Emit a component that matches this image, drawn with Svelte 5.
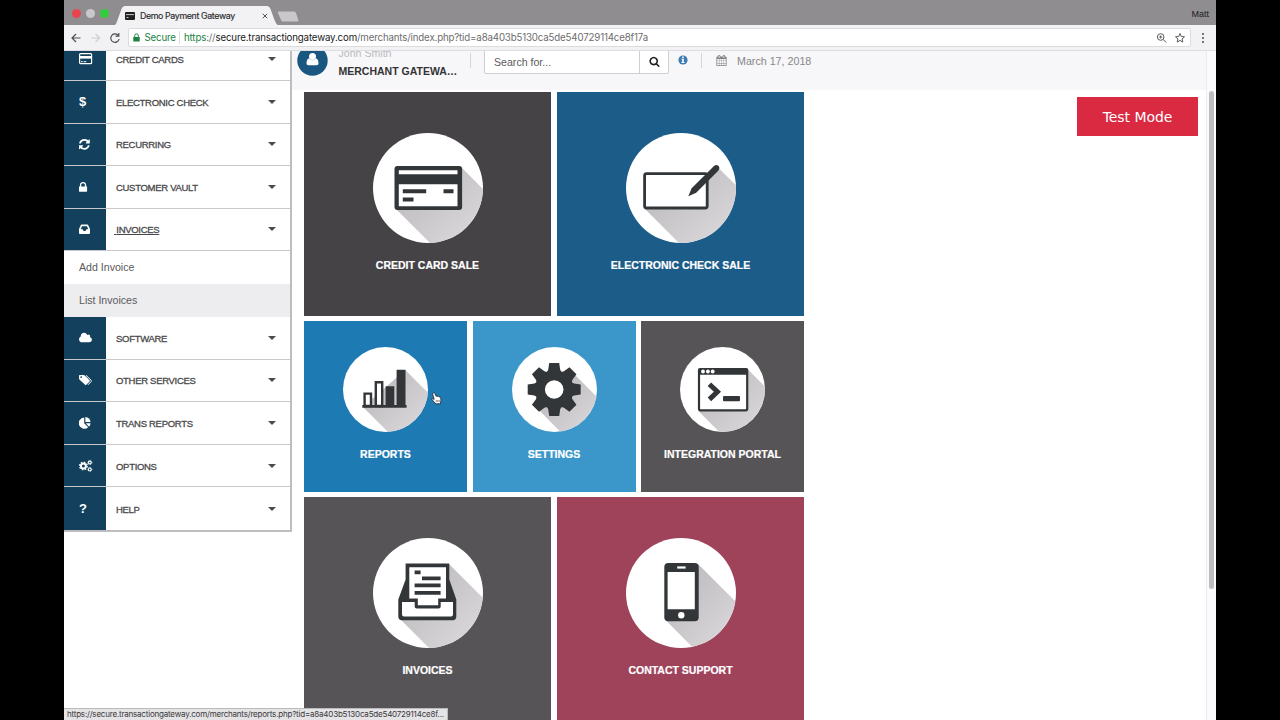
<script>
  const upper = [
    { icon: 'card', label: 'CREDIT CARDS' },
    { icon: 'dollar', label: 'ELECTRONIC CHECK' },
    { icon: 'refresh', label: 'RECURRING' },
    { icon: 'lock', label: 'CUSTOMER VAULT' },
    { icon: 'inbox', label: 'INVOICES', active: true }
  ];
  const lower = [
    { icon: 'cloud', label: 'SOFTWARE' },
    { icon: 'tags', label: 'OTHER SERVICES' },
    { icon: 'pie', label: 'TRANS REPORTS' },
    { icon: 'cogs', label: 'OPTIONS' },
    { icon: 'help', label: 'HELP' }
  ];
  const tileRows = [
    { size: 'big', tiles: [
      { kind: 'credit', label: 'CREDIT CARD SALE', tone: 'charcoal' },
      { kind: 'check', label: 'ELECTRONIC CHECK SALE', tone: 'navy' }
    ] },
    { size: 'small', tiles: [
      { kind: 'reports', label: 'REPORTS', tone: 'blue' },
      { kind: 'settings', label: 'SETTINGS', tone: 'sky' },
      { kind: 'portal', label: 'INTEGRATION PORTAL', tone: 'grey' }
    ] },
    { size: 'big', tiles: [
      { kind: 'invoices', label: 'INVOICES', tone: 'grey' },
      { kind: 'support', label: 'CONTACT SUPPORT', tone: 'wine' }
    ] }
  ];
  const shadows = {
    credit: 'M88 34L140 86V140H87L23 76Z',
    check: 'M92.5 35L140 82V140H83L19 76Z',
    reports: 'M62.3 23L110 71V110H70L20 60Z',
    settings: 'M63 28L110 75V110H73L26 62Z',
    portal: 'M67.5 22L110 65V110H64L18.5 64Z',
    invoices: 'M76 26L140 90V140H86L27 81Z',
    support: 'M72 26L140 94V140H97L39.5 82Z'
  };
  const teeth = [0, 45, 90, 135, 180, 225, 270, 315];
</script>

{#snippet menuIcon(name)}
  {#if name === 'dollar'}
    <span class="glyph">$</span>
  {:else if name === 'help'}
    <span class="glyph">?</span>
  {:else if name === 'refresh'}
    <svg width="12.6" height="12.6" viewBox="128 0 1792 1792" fill="#fff"><path d="M1639 1056q0 5-1 7-64 268-268 434.5t-478 166.5q-146 0-282.5-55t-243.5-157l-129 129q-19 19-45 19t-45-19-19-45v-448q0-26 19-45t45-19h448q26 0 45 19t19 45-19 45l-137 137q71 66 161 102t187 36q134 0 250-65t186-179q11-17 53-117 8-23 30-23h192q13 0 22.5 9.5t9.5 22.5zm25-800v448q0 26-19 45t-45 19h-448q-26 0-45-19t-19-45 19-45l138-138q-148-137-349-137-134 0-250 65t-186 179q-11 17-53 117-8 23-30 23h-199q-13 0-22.5-9.5t-9.5-22.5v-7q65-268 270-434.5t480-166.5q146 0 284 55.5t245 156.5l130-129q19-19 45-19t45 19 19 45z" /></svg>
  {:else if name === 'lock'}
    <svg width="12.6" height="12.6" viewBox="320 0 1792 1792" fill="#fff"><path d="M640 768h512v-192q0-106-75-181t-181-75-181 75-75 181v192zm832 96v576q0 40-28 68t-68 28h-960q-40 0-68-28t-28-68v-576q0-40 28-68t68-28h32v-192q0-184 132-316t316-132 316 132 132 316v192h32q40 0 68 28t28 68z" /></svg>
  {:else if name === 'cloud'}
    <svg width="13.4" height="12" viewBox="60 0 2000 1792" fill="#fff"><path d="M1984 1152q0 159-112.5 271.5t-271.5 112.5h-1088q-185 0-316.5-131.5t-131.5-316.5q0-132 71-241.5t187-163.5q-2-28-2-43 0-212 150-362t362-150q158 0 286.5 88t187.5 230q70-62 166-62 106 0 181 75t75 181q0 75-41 138 129 30 213 134.5t84 239.5z" /></svg>
  {:else if name === 'card'}
    <svg width="14" height="14" viewBox="0 0 14 14"><rect x=".6" y="1.7" width="12" height="10" rx="1" fill="none" stroke="#fff" stroke-width="1.2" /><path d="M.6 4h12v2.6H.6z" fill="#fff" /><path d="M2 9.7h1.8M4.7 9.7h2.6" stroke="#fff" stroke-width="1" /></svg>
  {:else if name === 'inbox'}
    <svg width="14" height="14" viewBox="0 0 14 14"><path fill="#fff" fill-rule="evenodd" d="M2.6 2.6h5.8q.6 0 .9.6L11 7v4q0 .9-.9.9H.9Q0 11.900 0 11V7l1.700-3.800q.3-.6.9-.6zM3 4.200L1.800 7.300h1.900l.8 1.600h2l.8-1.600h1.900L8 4.200z" /></svg>
  {:else if name === 'tags'}
    <svg width="14" height="14" viewBox="0 0 14 14"><path fill="#fff" fill-rule="evenodd" d="M0 2.800Q0 2 .8 2h3.600q.8 0 1.400.6l4.800 4.700q.6.6 0 1.200l-3.300 3.300q-.6.6-1.200 0L.6 6.700Q0 6.200 0 5.300zM2.200 3.200a.9.900 0 1 0 0 1.800.9.900 0 0 0 0-1.800z" /><path fill="none" stroke="#fff" stroke-width="1" d="M7 2.300l5.200 5q.6.600 0 1.200L9 11.800" /></svg>
  {:else if name === 'pie'}
    <svg width="14" height="14" viewBox="0 0 14 14" fill="#fff"><path d="M5.200 1.600V7.200L9.200 11.200A5.600 5.600 0 1 1 5.200 1.600z" /><path d="M6.400 1v5.100h5.100A5.200 5.200 0 0 0 6.400 1z" /><path d="M6.800 7.300h4.700q0 2-1.400 3.400z" /></svg>
  {:else if name === 'cogs'}
    <svg width="14" height="14" viewBox="0 0 14 14" fill="none" stroke="#fff"><circle cx="4.400" cy="7" r="2.500" stroke-width="2" /><circle cx="4.400" cy="7" r="3.900" stroke-width="1.200" stroke-dasharray="1.530 1.530" /><circle cx="10.800" cy="3.500" r="1.400" stroke-width="1.100" /><circle cx="10.800" cy="3.500" r="2.100" stroke-width=".7" stroke-dasharray=".94 .94" /><circle cx="10.800" cy="10.400" r="1.400" stroke-width="1.100" /><circle cx="10.800" cy="10.400" r="2.100" stroke-width=".7" stroke-dasharray=".94 .94" /></svg>
  {/if}
{/snippet}

{#snippet menuRow(item)}
  <li class="row">
    <span class="row-icon">{@render menuIcon(item.icon)}</span>
    <span class="row-label" class:active={item.active}>{#if item.active}&nbsp;{/if}{item.label}</span>
    <span class="caret"></span>
  </li>
{/snippet}

{#snippet tileIcon(kind, d)}
  <svg class="disc" width={d} height={d} viewBox="0 0 {d} {d}">
    <defs>
      <clipPath id="clip-{kind}"><circle cx={d / 2} cy={d / 2} r={d / 2} /></clipPath>
      <linearGradient id="fade-{kind}" x1="0" y1="0" x2="1" y2="1">
        <stop offset=".2" stop-color="#c1bfc1" /><stop offset=".7" stop-color="#dcdadc" />
      </linearGradient>
    </defs>
    <circle cx={d / 2} cy={d / 2} r={d / 2} fill="#fff" />
    <path d={shadows[kind]} fill="url(#fade-{kind})" clip-path="url(#clip-{kind})" />
    {#if kind === 'credit'}
      <rect x="21.500" y="33" width="67.600" height="44" rx="3" fill="#323638" />
      <path fill="#fff" d="M25.800 37.200h58.700v4H25.800zM25.800 51.200h58.700v22H25.800z" />
      <path fill="#323638" d="M29.800 56.200h23.400v4H29.800zM70.500 56.200h10v4h-10zM29.800 64.500h10.700v4H29.800z" />
    {:else if kind === 'check'}
      <rect x="18.600" y="40.700" width="62.600" height="34.300" rx="2" fill="#fff" stroke="#323638" stroke-width="2.800" />
      <path fill="#323638" d="M62.300 63.200L65.700 55.200L87.500 33.400Q90.500 31 92.500 33Q94.500 35 92 38L70.200 59.700z" />
    {:else if kind === 'reports'}
      <path fill="#323638" d="M19.300 58h44.300v2.700H19.300zM42.600 39.300h8.700V59h-8.700zM53.600 22.700h8.900V59h-8.900z" />
      <path fill="#fff" stroke="#323638" stroke-width="2.400" d="M21.600 46.600h6.400V59h-6.400zM32.800 35.300h6.400V59h-6.400z" />
    {:else if kind === 'settings'}
      <g transform="translate(42.200 42.500)" fill="#323638">
        <circle r="19.300" />
        {#each teeth as angle}
          <path transform="rotate({angle})" d="M-5 -26.500H5L6 -19.800L7.500 -17H-7.500L-6 -19.800z" />
        {/each}
        <circle r="9.300" fill="#fff" />
      </g>
    {:else if kind === 'portal'}
      <rect x="19" y="22" width="48.200" height="41.300" rx="1.500" fill="#fff" stroke="#323638" stroke-width="2.200" />
      <path fill="#323638" d="M18.500 21.500h49.200v6.300H18.500z" />
      <g fill="#fff"><circle cx="23" cy="24.500" r="1.900" /><circle cx="27.900" cy="24.500" r="1.900" /><circle cx="32.700" cy="24.500" r="1.900" /></g>
      <path fill="none" stroke="#323638" stroke-width="5" d="M29.400 37.200L37.400 44.800L29.400 52.400" />
      <rect x="43" y="49" width="17" height="5.200" rx="1" fill="#323638" />
    {:else if kind === 'invoices'}
      <path fill="#323638" d="M32.600 25.500h43.700v16L83.300 61.500V78.500Q83.300 82.200 79.600 82.200H29Q25.300 82.200 25.300 78.500V61.500L32.600 41.500z" />
      <path fill="#fff" d="M36.300 29.200H73v31.200H65.200V67.200H44.800V60.400H36.300z" />
      <path fill="#fff" d="M29 64H41.700V68.500Q41.700 70.600 43.800 70.600H65.600Q67.700 70.600 67.700 68.500V64H80V76.500Q80 78.500 78 78.500H31Q29 78.500 29 76.500z" />
      <path fill="#323638" d="M41.600 32.600h6v3.600h-6zM49 38.400h18.600v3.800H49zM41.600 45.600h26v3.700h-26zM41.600 53h26v3.800h-26z" />
    {:else if kind === 'support'}
      <rect x="38.300" y="25" width="34.400" height="58.200" rx="4" fill="#323638" />
      <path fill="#fff" d="M41.600 33.900h27.200v37.300H41.600z" />
      <rect x="51.200" y="28.400" width="8.400" height="2.200" fill="#fff" />
      <circle cx="55.300" cy="77.200" r="3.200" fill="#fff" />
    {/if}
  </svg>
{/snippet}

<div class="screen">
  <div class="browser">
    <div class="tabstrip">
      <i class="light red"></i><i class="light pale"></i><i class="light green"></i>
      <div class="tab">
        <svg class="tab-shape" width="166" height="20" viewBox="0 0 166 20"><path fill="#f2f1f3" d="M0 20C3 19 3.500 17 4.500 14L8.500 3Q9.500 0 12.500 0H153.500Q156.500 0 157.500 3L161.500 14Q163.500 19 166 20z" /></svg>
        <svg width="10" height="8" viewBox="0 0 10 8"><rect width="10" height="8" rx="1" fill="#222" /><path d="M1 2.600h8M1.500 5.500h2" stroke="#ddd" stroke-width=".9" /></svg>
        <span class="tab-title">Demo Payment Gateway</span>
        <svg width="6" height="6" viewBox="0 0 6 6"><path d="M.8.800l4.400 4.400M5.200.800L.8 5.200" stroke="#555" stroke-width="1" /></svg>
      </div>
      <svg class="newtab" width="23" height="11" viewBox="0 0 23 11"><path fill="#c9c7ca" d="M1.500 .5H17Q18.500 .5 19 2L21.500 9.500Q21.500 10.500 20.500 10.500H6Q4.500 10.500 4 9L1 2Q.5.500 1.500.500z" /></svg>
      <span class="profile">Matt</span>
    </div>

    <div class="toolbar">
      <svg class="nav" width="56" height="14" viewBox="0 0 56 14" fill="none" stroke-width="1.200">
        <path stroke="#4f4e50" d="M10.500 7H2M6 3L2 7l4 4" />
        <path stroke="#cfced0" d="M21 7h8.500M25.500 3l4 4-4 4" />
        <path stroke="#4f4e50" d="M48 4.200A4.200 4.200 0 1 0 49.100 8M48.800 2v3.200H45.500" />
      </svg>
      <div class="omnibox">
        <svg class="padlock" width="7" height="9" viewBox="0 0 7 9"><path d="M.3 4h6.400v4.500H.3z" fill="#1c8243" /><path d="M1.700 4.500V2.700a1.800 1.800 0 0 1 3.600 0v1.800" fill="none" stroke="#1c8243" stroke-width="1" /></svg>
        <span class="secure">Secure</span>
        <span class="url"><b>https</b>://<em>secure.transactiongateway.com</em>/merchants/index.php?tid=a8a403b5130ca5de540729114ce8f17a</span>
        <svg class="omni-icons" width="30" height="12" viewBox="0 0 30 12" fill="none" stroke="#5b5a5c">
          <circle cx="4.700" cy="5" r="3.300" stroke-width="1" /><path d="M7.200 7.500l3 3M3.200 5h3M4.700 3.500v3" stroke-width="1" />
          <path d="M24 1.500l1.300 3 3.200.3-2.400 2.100.7 3.200L24 8.400l-2.800 1.700.7-3.200-2.400-2.100 3.200-.3z" stroke-width="1" />
        </svg>
      </div>
      <span class="dots"><i></i><i></i><i></i></span>
    </div>

    <div class="page">
      <aside>
        <ul>
          {#each upper as item}{@render menuRow(item)}{/each}
          <li class="sub">Add Invoice</li>
          <li class="sub hover">List Invoices</li>
          {#each lower as item}{@render menuRow(item)}{/each}
        </ul>
      </aside>

      <main>
        <header>
          <svg class="avatar" width="31" height="31" viewBox="0 0 31 31"><circle cx="15.500" cy="15.500" r="15.200" fill="#195680" /><circle cx="15.500" cy="11.600" r="3.500" fill="#fff" /><path fill="#fff" d="M12 13.300Q15.500 17 19 13.300Q21.500 14.300 21.500 18.500Q21.500 20.200 19.800 20.200H11.200Q9.500 20.200 9.500 18.500Q9.500 14.300 12 13.300z" /></svg>
          <div class="who"><span class="person">John Smith</span><span class="merchant">MERCHANT GATEWA…</span></div>
          <i class="divider first"></i>
          <div class="search">
            <span class="field">Search for...</span>
            <span class="go"><svg width="11" height="11" viewBox="0 0 1792 1792" fill="#222"><path d="M1216 832q0-185-131.500-316.500t-316.500-131.500-316.500 131.500-131.500 316.500 131.500 316.500 316.500 131.500 316.500-131.500 131.500-316.500zm512 832q0 52-38 90t-90 38q-54 0-90-38l-343-342q-179 124-399 124-143 0-273.500-55.500t-225-150-150-225-55.500-273.500 55.500-273.500 150-225 225-150 273.500-55.500 273.500 55.500 225 150 150 225 55.500 273.500q0 220-124 399l343 343q37 37 37 90z" /></svg></span>
          </div>
          <svg class="info" width="10" height="10" viewBox="0 0 10 10"><circle cx="5" cy="5" r="4.600" fill="#3e7cb1" /><path fill="#fff" d="M4.200 1.500h1.600V3H4.200zM3.600 3.800h2.200v3.100h.7v1H3.500v-1h.7V4.800h-.6z" /></svg>
          <i class="divider second"></i>
          <svg class="calendar" width="11" height="11" viewBox="64 0 1664 1792" fill="#858386"><path d="M192 1664h288v-288h-288v288zm352 0h320v-288h-320v288zm-352-352h288v-320h-288v320zm352 0h320v-320h-320v320zm-352-384h288v-288h-288v288zm736 736h320v-288h-320v288zm-384-736h320v-288h-320v288zm768 736h288v-288h-288v288zm-384-352h320v-320h-320v320zm-352-864v-288q0-13-9.500-22.500t-22.500-9.500h-64q-13 0-22.500 9.500t-9.500 22.500v288q0 13 9.500 22.500t22.500 9.500h64q13 0 22.500-9.500t9.500-22.500zm736 864h288v-320h-288v320zm-384-384h320v-288h-320v288zm384 0h288v-288h-288v288zm32-480v-288q0-13-9.500-22.500t-22.500-9.500h-64q-13 0-22.500 9.500t-9.500 22.500v288q0 13 9.500 22.500t22.500 9.500h64q13 0 22.500-9.500t9.500-22.500zm384-64v1280q0 52-38 90t-90 38h-1408q-52 0-90-38t-38-90v-1280q0-52 38-90t90-38h128v-96q0-66 47-113t113-47h64q66 0 113 47t47 113v96h384v-96q0-66 47-113t113-47h64q66 0 113 47t47 113v96h128q52 0 90 38t38 90z" /></svg>
          <span class="date">March 17, 2018</span>
        </header>
        <div class="body">
          <div class="tiles">
            {#each tileRows as row}
              <div class="tile-row {row.size}">
                {#each row.tiles as tile}
                  <div class="tile {tile.tone}">
                    {@render tileIcon(tile.kind, row.size === 'big' ? 110 : 85)}
                    <span>{tile.label}</span>
                  </div>
                {/each}
              </div>
            {/each}
          </div>
          <div class="test-mode">Test Mode</div>
        </div>
      </main>
      <div class="scrollbar"><i></i></div>
    </div>

    <div class="status">https://secure.transactiongateway.com/merchants/reports.php?tid=a8a403b5130ca5de540729114ce8f...</div>
    <svg class="cursor" width="11" height="13" viewBox="0 0 11 13"><path fill="#fff" stroke="#222" stroke-width=".8" stroke-linejoin="round" d="M2.200 1Q3.200.300 3.900 1.500L5 4.200Q6 3.600 6.600 4.400Q7.700 4 8.200 4.900Q9.600 4.700 9.800 6.200Q10.200 8.500 9.300 11.800H4.600Q3.500 9.800 1 7.800Q.2 6.600 1.600 6.600L3.200 7.400L1.700 2.300Q1.500 1.400 2.200 1z" /><path d="M5.300 8v2M6.800 8v2M8.200 8v2" stroke="#444" stroke-width=".6" /></svg>
  </div>
</div>

<style>
  :global(body) { background: #000; }
  .screen { width: 1280px; height: 720px; background: #000; overflow: hidden; display: flex; justify-content: center; font-family: "Liberation Sans", Arial, sans-serif; }
  .browser { position: relative; width: 1152px; height: 720px; display: flex; flex-direction: column; background: #fff; overflow: hidden; }
  svg { display: block; flex: none; }

  .tabstrip { height: 25px; flex: none; display: flex; align-items: flex-start; background: #8f8d90; padding-left: 8px; }
  .light { width: 9px; height: 9px; border-radius: 50%; margin: 8.500px 4.800px 0 0; flex: none; }
  .red { background: #e8464f; } .pale { background: #cbc8cc; } .green { background: #32cc3c; }
  .tab { position: relative; width: 166px; height: 19px; margin: 6px 0 0 -.5px; padding: 0 0 0 12px; box-sizing: border-box; display: flex; align-items: center; font-family: Inter, sans-serif; flex: none; }
  .tab > * { position: relative; }
  .tab .tab-shape { position: absolute; left: 0; top: 0; }
  .tab-title { font-size: 8.800px; letter-spacing: -.35px; color: #2a292b; margin-left: 5px; width: 122.500px; white-space: nowrap; flex: none; -webkit-text-stroke: .15px #2a292b; }
  .newtab { margin: 11px 0 0 -2px; }
  .profile { margin: 8px 7px 0 auto; font-size: 9px; line-height: 12px; color: #1c1b1d; }

  .toolbar { height: 26px; flex: none; box-sizing: border-box; background: #f2f1f3; border-bottom: 1px solid #dddce0; display: flex; align-items: center; }
  .nav { margin-left: 6px; }
  .omnibox { width: 1063px; height: 19px; margin-left: 2px; box-sizing: border-box; border: 1px solid #dcdbdd; border-radius: 2px; background: #fff; display: flex; align-items: center; font-family: Inter, sans-serif; font-size: 9.700px; white-space: nowrap; }
  .padlock { margin-left: 4px; }
  .secure { color: #1c8243; margin-left: 4.500px; border-right: 1px solid #ddd; line-height: 13px; width: 34.500px; letter-spacing: -.15px; }
  .url { margin-left: 4px; color: #6d6c6e; letter-spacing: -.15px; }
  .url b { font-weight: 400; color: #1c8243; }
  .url em { font-style: normal; color: #1a1a1a; }
  .omni-icons { margin: 0 4px 0 auto; }
  .dots { display: flex; flex-direction: column; gap: 2px; margin-left: 11px; }
  .dots i { width: 2px; height: 2px; background: #4a494b; border-radius: 50%; }

  .page { flex: 1; min-height: 0; display: flex; overflow: hidden; }
  aside { width: 228px; flex: none; }
  ul { list-style: none; margin: -12.600px 0 0; padding: 0; box-sizing: border-box; width: 228px; background: #fff; border-right: 2px solid #bdbcbe; border-bottom: 2px solid #bdbcbe; }
  .row { height: 42.550px; box-sizing: border-box; border-bottom: 1px solid #c9c8ca; display: flex; align-items: center; }
  .row:last-child { border-bottom: 0; }
  .row-icon { width: 42px; height: 100%; box-sizing: border-box; padding-left: 15px; background: #12405d; display: flex; align-items: center; }
  .glyph { font-size: 13px; font-weight: 700; color: #fff; line-height: 14px; }
  .row-label { flex: 1; margin-left: 10px; padding-top: 1px; font-size: 9.500px; letter-spacing: -.3px; color: #4b4a4c; -webkit-text-stroke: .3px #4b4a4c; }
  .active { text-decoration: underline; margin-left: 8px; }
  .caret { border: 4px solid transparent; border-top: 4px solid #4b4a4c; border-bottom: 0; margin-right: 14px; }
  .sub { height: 33px; padding-left: 15px; font-size: 10.600px; line-height: 33px; color: #5b5a5c; }
  .hover { background: #edecef; }

  main { width: 914px; flex: none; display: flex; flex-direction: column; }
  header { height: 39px; flex: none; background: #f7f6f9; display: flex; align-items: flex-start; }
  .avatar { margin: -6px 0 0 5px; }
  .who { margin: -4px 0 0 10.500px; width: 131.500px; display: flex; flex-direction: column; white-space: nowrap; }
  .person { font-size: 10.600px; line-height: 13px; color: #bcbbbd; }
  .merchant { font-size: 10.500px; line-height: 13px; margin-top: 5px; font-weight: 700; color: #333; }
  .divider { width: 1px; height: 15px; margin-top: 2px; background: #d5d4d6; }
  .search { margin: -2px 0 0 13px; width: 185px; height: 25px; box-sizing: border-box; border: 1px solid #cfced0; border-radius: 2px; background: #fff; display: flex; }
  .field { flex: 1; padding-left: 9px; font-size: 10.600px; line-height: 24px; color: #5c5b5d; }
  .go { width: 28px; border-left: 1px solid #cfced0; display: flex; align-items: center; justify-content: center; }
  .info { margin: 4px 0 0 9px; }
  .second { margin-left: 13px; }
  .calendar { margin: 4px 0 0 14px; }
  .date { margin: 3px 0 0 10px; font-size: 10.700px; line-height: 14px; color: #88868a; }

  .body { flex: 1; display: flex; justify-content: space-between; align-items: flex-start; padding: 2px 8px 0 12px; }
  .tiles { width: 500px; display: flex; flex-direction: column; gap: 5px; }
  .tile-row { display: grid; }
  .big { grid-template-columns: 1fr 1fr; column-gap: 6px; height: 224px; }
  .small { grid-template-columns: repeat(3, 1fr); column-gap: 5.500px; height: 171px; }
  .tile { display: flex; flex-direction: column; align-items: center; color: #fff; font-size: 10.500px; font-weight: 700; line-height: 13px; white-space: nowrap; padding-top: 41px; }
  .small .tile { padding-top: 26px; }
  .tile span { margin-top: 16px; -webkit-text-stroke: .2px #fff; }
  .charcoal { background: #454345; } .navy { background: #1b5c88; } .blue { background: #1e7ab3; }
  .sky { background: #3b97ca; } .grey { background: #565457; } .wine { background: #9f435b; }
  .test-mode { margin-top: 5px; width: 121px; height: 39px; box-sizing: border-box; padding-top: 1px; background: #d92a42; color: #fff; font-family: "DejaVu Sans", sans-serif; font-size: 14px; letter-spacing: -.05px; line-height: 39px; text-align: center; }

  .scrollbar { flex: 1; background: #fbfafc; border-left: 1px solid #ebeaec; }
  .scrollbar i { display: block; width: 5px; height: 498px; margin: 40px 0 0 2px; border-radius: 3px; background: #bcbbbd; }

  .status { position: absolute; left: 0; bottom: 0; width: 384px; height: 12px; box-sizing: border-box; padding-left: 3px; background: #e4e3e6; border-top: 1px solid #bbb; border-right: 1px solid #bbb; font: 8px/11px Inter, sans-serif; letter-spacing: -.2px; color: #3a393b; white-space: nowrap; overflow: hidden; }
  .cursor { position: absolute; left: 367px; top: 392px; }
</style>
